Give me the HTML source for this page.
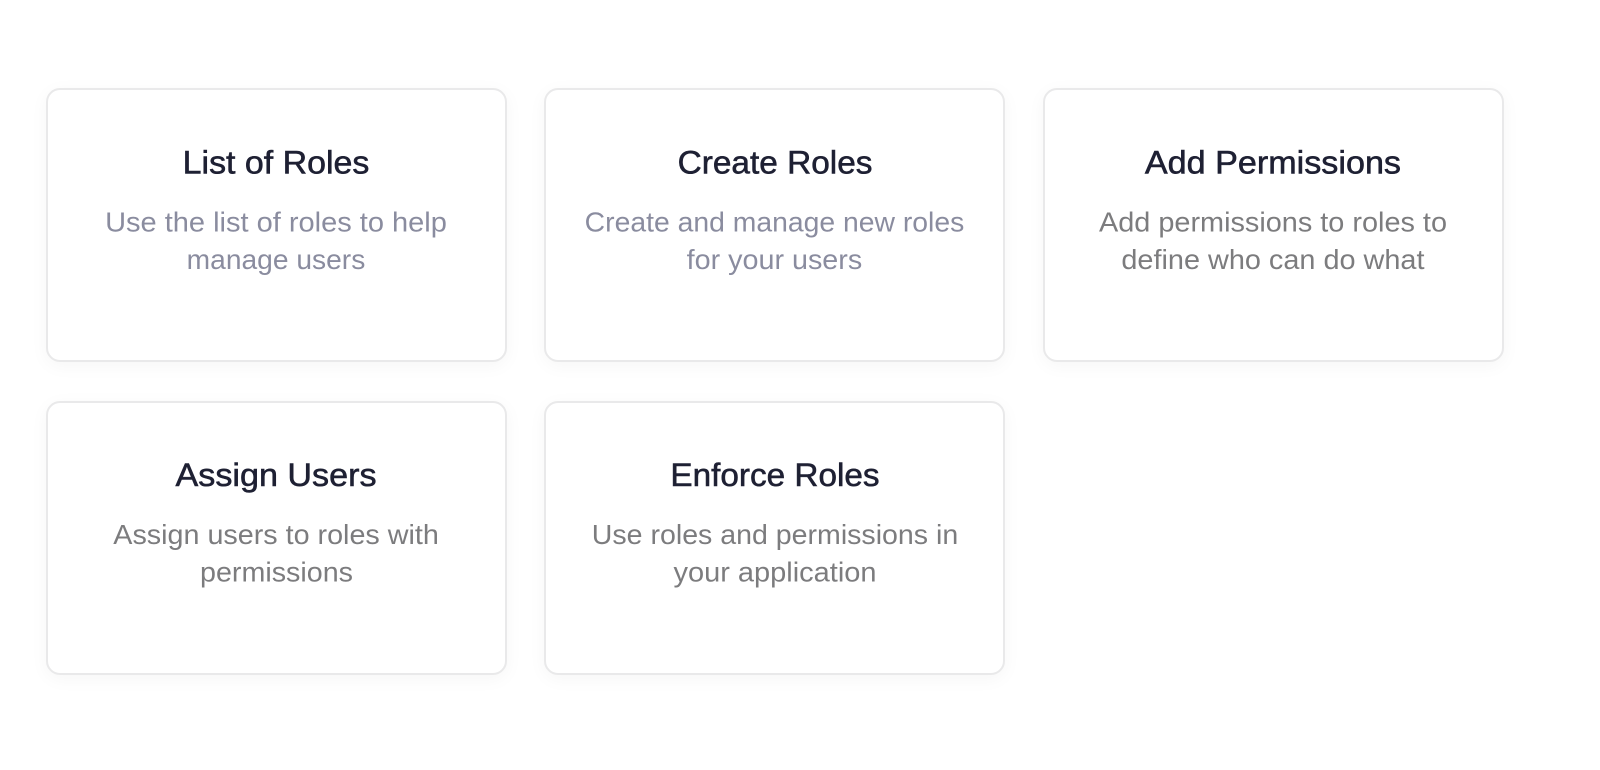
<!DOCTYPE html>
<html lang="en">
<head>
<meta charset="utf-8">
<title>Roles</title>
<style>
html,body{margin:0;padding:0;background:#fff;width:1600px;height:770px;overflow:hidden}
.card{position:absolute;box-sizing:border-box;width:461px;height:274px;background:#fff;border:2px solid #e9e9ea;border-radius:14px;box-shadow:0 4px 18px rgba(0,0,0,.04)}
svg{position:absolute;left:0;top:0}
text{font-family:"Liberation Sans",sans-serif;text-anchor:start}
.t{font-size:32px;fill:#1e2033;stroke:#1e2033;stroke-width:.55px}
.a{font-size:28px;fill:#8a8c9f}
.b{font-size:28px;fill:#7c7c7e}
</style>
</head>
<body>
<div class="card" style="left:46px;top:88px"></div>
<div class="card" style="left:544px;top:88px"></div>
<div class="card" style="left:1043px;top:88px"></div>
<div class="card" style="left:46px;top:400.5px"></div>
<div class="card" style="left:544px;top:400.5px"></div>
<svg width="1600" height="770" viewBox="0 0 1600 770">
<text class="t" x="182.7" y="173.5" textLength="186.7" lengthAdjust="spacingAndGlyphs">List of Roles</text>
<text class="a" x="105.1" y="231.5" textLength="341.8" lengthAdjust="spacingAndGlyphs">Use the list of roles to help</text>
<text class="a" x="186.7" y="269" textLength="178.6" lengthAdjust="spacingAndGlyphs">manage users</text>
<text class="t" x="677.6" y="173.5" textLength="194.9" lengthAdjust="spacingAndGlyphs">Create Roles</text>
<text class="a" x="584.7" y="231.5" textLength="379.6" lengthAdjust="spacingAndGlyphs">Create and manage new roles</text>
<text class="a" x="686.7" y="269" textLength="175.5" lengthAdjust="spacingAndGlyphs">for your users</text>
<text class="t" x="1144.9" y="173.5" textLength="256.1" lengthAdjust="spacingAndGlyphs">Add Permissions</text>
<text class="b" x="1099" y="231.5" textLength="348" lengthAdjust="spacingAndGlyphs">Add permissions to roles to</text>
<text class="b" x="1121.4" y="269" textLength="303.1" lengthAdjust="spacingAndGlyphs">define who can do what</text>
<text class="t" x="175.5" y="486" textLength="201" lengthAdjust="spacingAndGlyphs">Assign Users</text>
<text class="b" x="113.3" y="544" textLength="325.5" lengthAdjust="spacingAndGlyphs">Assign users to roles with</text>
<text class="b" x="200" y="581.5" textLength="153" lengthAdjust="spacingAndGlyphs">permissions</text>
<text class="t" x="670.4" y="486" textLength="209.2" lengthAdjust="spacingAndGlyphs">Enforce Roles</text>
<text class="b" x="591.8" y="544" textLength="366.4" lengthAdjust="spacingAndGlyphs">Use roles and permissions in</text>
<text class="b" x="673.5" y="581.5" textLength="203" lengthAdjust="spacingAndGlyphs">your application</text>
</svg>
</body>
</html>
